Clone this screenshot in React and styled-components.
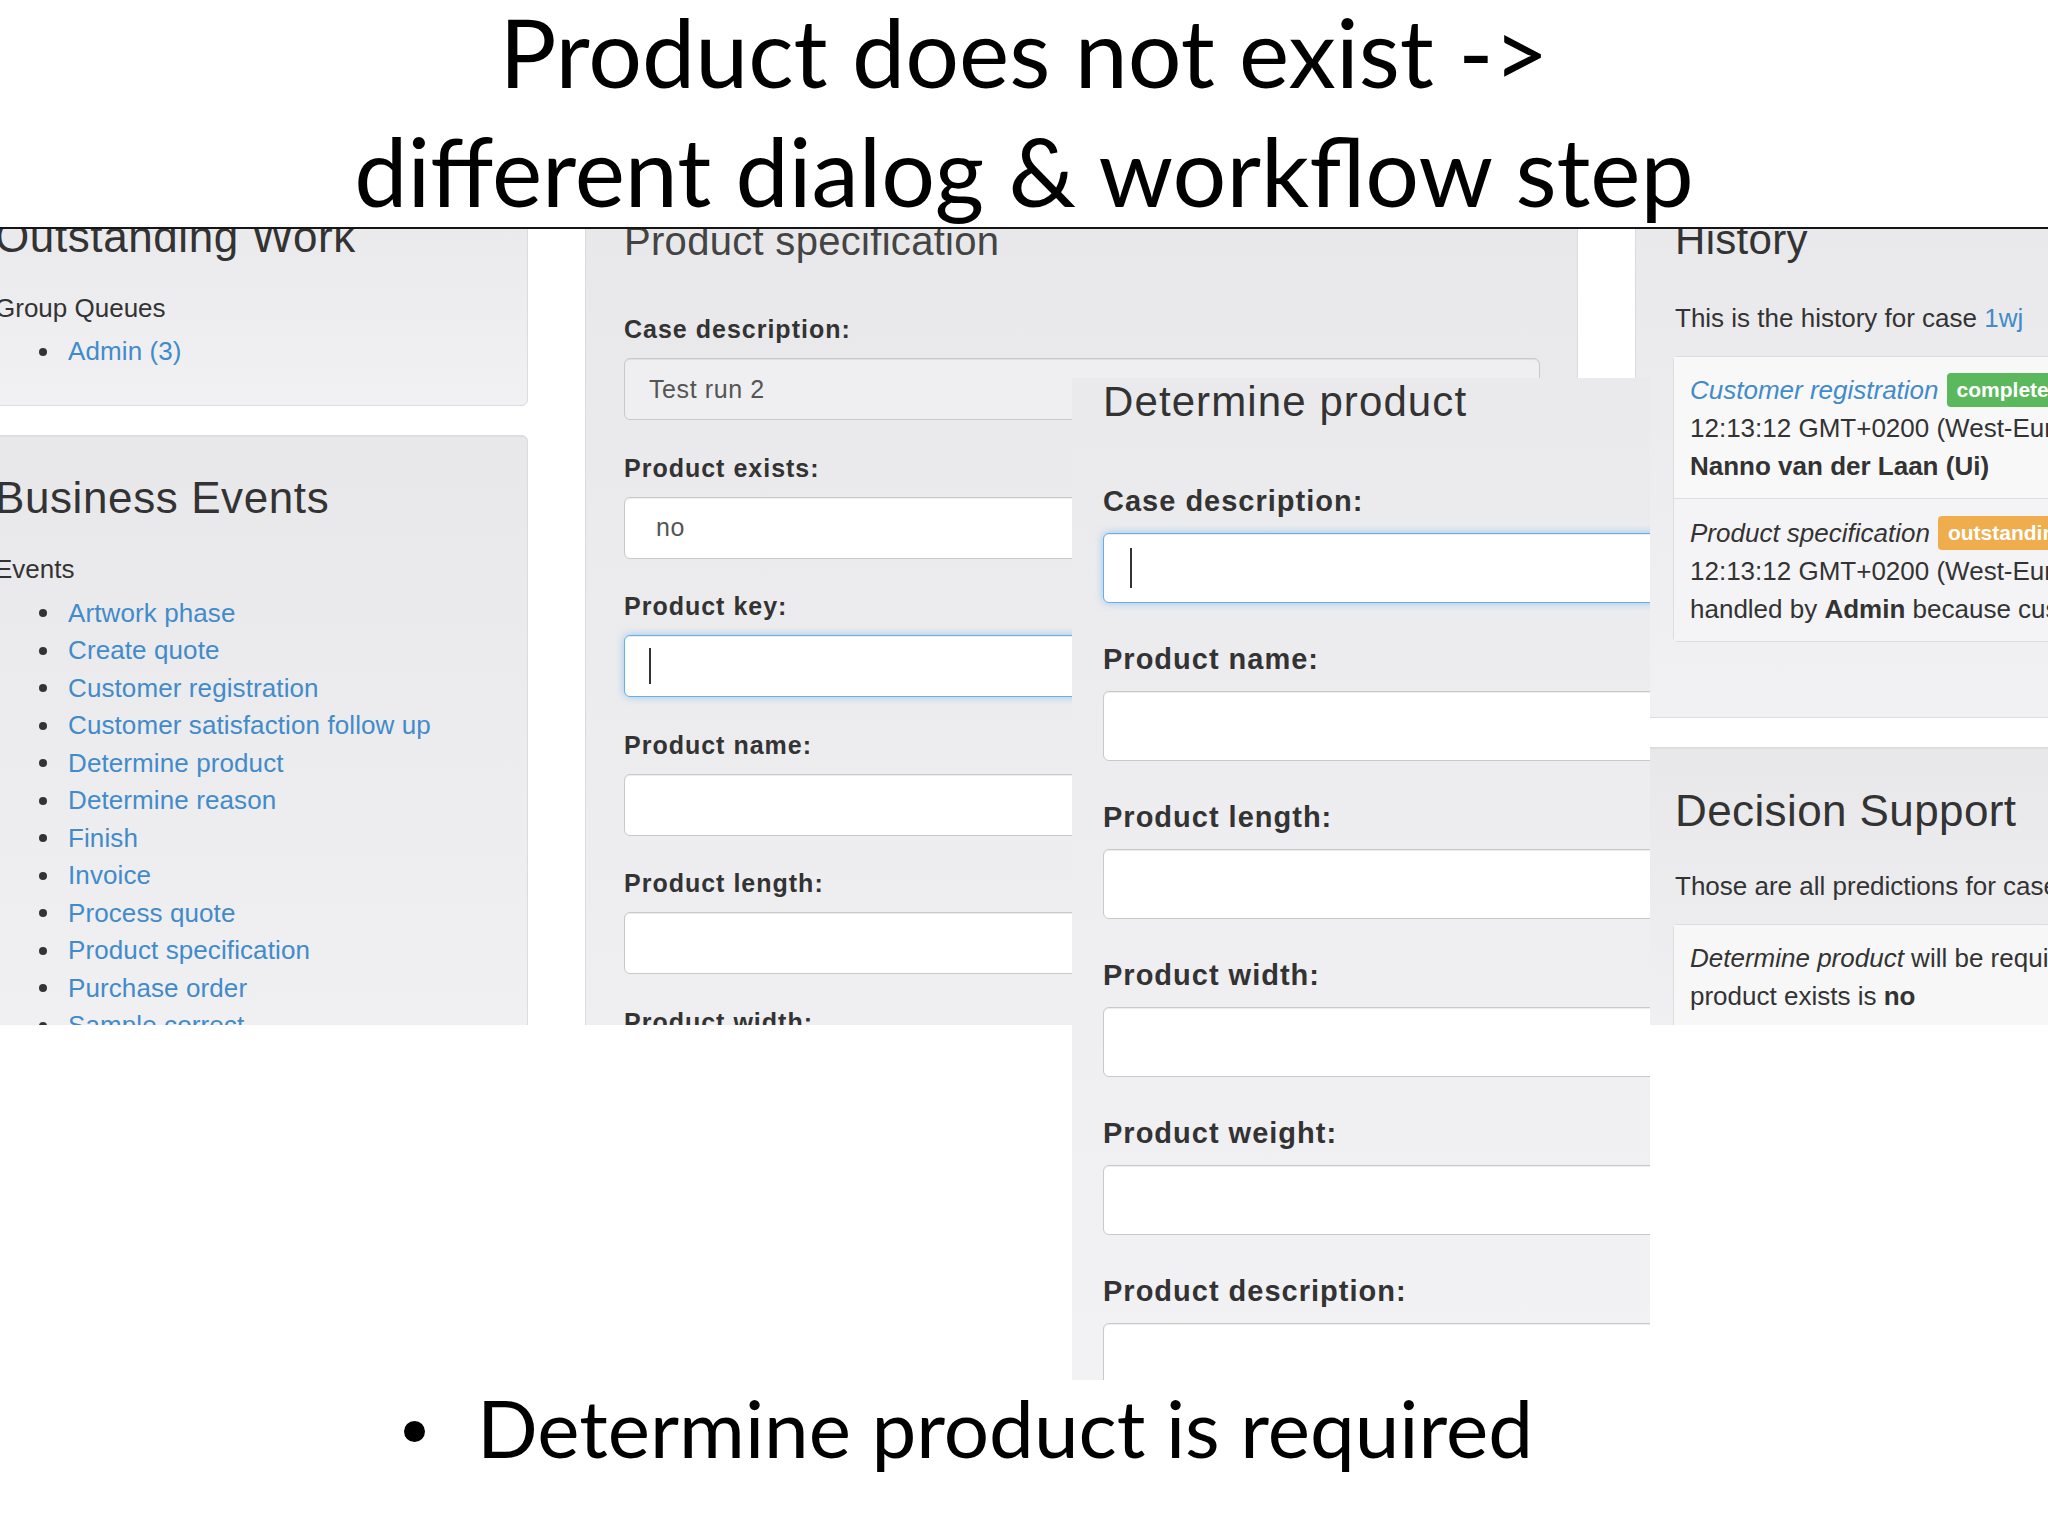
import React from "react";
import styled, { createGlobalStyle } from "styled-components";

const GlobalStyle = createGlobalStyle`
  html, body {
    margin: 0;
    padding: 0;
    background: #fff;
  }
  body {
    width: 2048px;
    height: 1536px;
    overflow: hidden;
  }
`;

const Slide = styled.div`
  position: relative;
  width: 2048px;
  height: 1536px;
  display: flex;
  flex-direction: column;
  overflow: hidden;
  background: #fff;
`;

const Title = styled.h1`
  margin: 0;
  height: 227px;
  box-sizing: border-box;
  font-family: Lato, "Open Sans", sans-serif;
  font-weight: 400;
  font-size: 95px;
  line-height: 120px;
  text-align: center;
  color: #000;
`;

const TitleLine = styled.div`
  margin-top: ${(p) => p.$offset || 0}px;
  white-space: nowrap;
`;

// the browser screenshot pasted into the slide
const Shot = styled.div`
  height: 796px;
  border-top: 2px solid #151515;
  display: flex;
  overflow: hidden;
  background: #fff;
  font-family: "Liberation Sans", Arial, sans-serif;
  color: #333;
  font-size: 26px;
  line-height: 37px;
`;

const Column = styled.div`
  flex: none;
  width: ${(p) => p.$width}px;
  margin-left: ${(p) => p.$left}px;
  display: flex;
  flex-direction: column;
`;

const Panel = styled.div`
  flex: none;
  margin-top: ${(p) => p.$top}px;
  padding: ${(p) => p.$pad};
  background: linear-gradient(to bottom, #e8e8ea, #f1f1f3);
  border: 1px solid #dcdcdf;
  border-radius: 6px;
  box-shadow: inset 0 1px 1px rgba(0, 0, 0, 0.05);
`;

const PanelHeading = styled.h2`
  margin: 0;
  font-weight: 400;
  font-size: ${(p) => p.$size || 44}px;
  line-height: 46px;
  letter-spacing: ${(p) => p.$spacing ?? 0.6}px;
  color: ${(p) => p.$color || "#333"};
  white-space: nowrap;
`;

const Para = styled.p`
  margin: ${(p) => p.$top}px 0 0;
  white-space: nowrap;
`;

const Bullets = styled.ul`
  list-style: none;
  margin: ${(p) => p.$top}px 0 0;
  padding: 0 0 0 44px;
  line-height: ${(p) => p.$line || 37}px;
`;

const Bullet = styled.li`
  display: flex;
  align-items: center;
  white-space: nowrap;
  letter-spacing: 0.1px;
  &::before {
    content: "";
    flex: none;
    width: 8px;
    height: 8px;
    border-radius: 50%;
    background: #333;
    margin-right: 21px;
  }
`;

const Link = styled.a`
  color: #428bca;
  text-decoration: none;
`;

const Label = styled.div`
  margin-top: ${(p) => p.$top}px;
  font-weight: 700;
  font-size: ${(p) => p.$size}px;
  line-height: ${(p) => p.$line}px;
  letter-spacing: 1px;
  color: #333;
  white-space: nowrap;
`;

const Field = styled.div`
  box-sizing: border-box;
  flex: none;
  margin-top: ${(p) => p.$top}px;
  width: ${(p) => p.$width || "100%"};
  height: ${(p) => p.$height}px;
  padding-left: ${(p) => p.$indent || 24}px;
  display: flex;
  align-items: center;
  background: ${(p) => (p.$disabled ? "#efeff1" : "#fff")};
  border: 1px solid ${(p) => (p.$focus ? "#66afe9" : "#c9c9cc")};
  border-radius: 6px;
  box-shadow: ${(p) =>
    p.$focus
      ? "inset 0 1px 1px rgba(0,0,0,.075), 0 0 8px rgba(102,175,233,.6)"
      : "inset 0 1px 1px rgba(0,0,0,.075)"};
  font-size: 25px;
  letter-spacing: 0.6px;
  color: #555;
`;

const Caret = styled.span`
  width: 2px;
  height: ${(p) => p.$height}px;
  background: #333;
`;

const ListGroup = styled.div`
  margin: ${(p) => p.$top}px 0 0 -2px;
  border: 1px solid #dddde0;
  border-radius: 4px 0 0 4px;
  line-height: 38px;
`;

const ListItem = styled.div`
  padding: ${(p) => p.$pad};
  background: ${(p) => p.$bg};
  border-top: ${(p) => (p.$first ? "none" : "1px solid #dddde0")};
  white-space: nowrap;
`;

const Step = styled.em`
  color: ${(p) => (p.$link ? "#428bca" : "#333")};
`;

const Badge = styled.span`
  display: inline-block;
  margin-left: 8px;
  padding: 0 10px;
  height: 34px;
  line-height: 34px;
  vertical-align: 2px;
  border-radius: 4px;
  background: ${(p) => p.$color};
  color: #fff;
  font-size: 21px;
  font-weight: 700;
`;

// dialog pasted on top of the screenshot
const Dialog = styled.div`
  position: absolute;
  left: 1072px;
  top: 378px;
  width: 578px;
  height: 1002px;
  box-sizing: border-box;
  padding: 1px 0 0 31px;
  overflow: hidden;
  display: flex;
  flex-direction: column;
  background: linear-gradient(to bottom, #eaeaec, #f2f2f4);
  font-family: "Liberation Sans", Arial, sans-serif;
  color: #333;
`;

const DialogHeading = styled.h2`
  margin: 0;
  font-weight: 400;
  font-size: 42px;
  line-height: 46px;
  letter-spacing: 1.1px;
  color: #333;
  white-space: nowrap;
`;

const Footer = styled.div`
  flex: 1;
  display: flex;
  align-items: flex-start;
  padding: 0 0 0 404px;
  font-family: Lato, "Open Sans", sans-serif;
  font-size: 80px;
  color: #000;
`;

const FooterDot = styled.span`
  flex: none;
  width: 21px;
  height: 21px;
  margin-top: 396px;
  border-radius: 50%;
  background: #000;
`;

const FooterText = styled.span`
  margin: 352px 0 0 52px;
  line-height: 100px;
  white-space: nowrap;
`;

const queues = ["Admin (3)"];
const events = [
  "Artwork phase",
  "Create quote",
  "Customer registration",
  "Customer satisfaction follow up",
  "Determine product",
  "Determine reason",
  "Finish",
  "Invoice",
  "Process quote",
  "Product specification",
  "Purchase order",
  "Sample correct",
  "Sample incorrect",
];

const specFields = [
  { label: "Case description:", value: "Test run 2", disabled: true },
  { label: "Product exists:", value: "no", indent: 31 },
  { label: "Product key:", focus: true },
  { label: "Product name:" },
  { label: "Product length:" },
  { label: "Product width:" },
  { label: "Product weight:" },
];

const dialogFields = [
  { label: "Case description:", focus: true },
  { label: "Product name:" },
  { label: "Product length:" },
  { label: "Product width:" },
  { label: "Product weight:" },
  { label: "Product description:" },
];

function App() {
  return (
    <>
      <GlobalStyle />
      <Slide>
        <Title>
          <TitleLine $offset={-9}>Product does not exist -&gt;</TitleLine>
          <TitleLine $offset={-1}>different dialog &amp; workflow step</TitleLine>
        </Title>

        <Shot>
          {/* left: queues and business events */}
          <Column $width={548} $left={-20}>
            <Panel $top={-60} $pad="44px 14px 35px">
              <PanelHeading>Outstanding Work</PanelHeading>
              <Para $top={30}>Group Queues</Para>
              <Bullets $top={6}>
                {queues.map((q) => (
                  <Bullet key={q}>
                    <Link>{q}</Link>
                  </Bullet>
                ))}
              </Bullets>
            </Panel>
            <Panel $top={29} $pad="39px 14px 20px">
              <PanelHeading>Business Events</PanelHeading>
              <Para $top={29.5}>Events</Para>
              <Bullets $top={7} $line={37.5}>
                {events.map((e) => (
                  <Bullet key={e}>
                    <Link>{e}</Link>
                  </Bullet>
                ))}
              </Bullets>
            </Panel>
          </Column>

          {/* middle: product specification form */}
          <Column $width={993} $left={57}>
            <Panel $top={-60} $pad="48px 37px 40px 38px">
              <PanelHeading $size={40} $spacing={0.3} $color="#444">
                Product specification
              </PanelHeading>
              {specFields.map((f, i) => (
                <React.Fragment key={f.label}>
                  <Label $top={i === 0 ? 48 : 30.5} $size={25} $line={35}>
                    {f.label}
                  </Label>
                  <Field
                    $top={11}
                    $height={62}
                    $disabled={f.disabled}
                    $focus={f.focus}
                    $indent={f.indent}
                  >
                    {f.value}
                    {f.focus && <Caret $height={36} />}
                  </Field>
                </React.Fragment>
              ))}
            </Panel>
          </Column>

          {/* right: history and decision support */}
          <Column $width={620} $left={57}>
            <Panel $top={-60} $pad="47px 0 75px 39px">
              <PanelHeading $size={42} $spacing={0.3}>History</PanelHeading>
              <Para $top={36.5}>
                This is the history for case <Link>1wj</Link>
              </Para>
              <ListGroup $top={19.5}>
                <ListItem $first $pad="14px 16px 13px" $bg="#f8f8f9">
                  <div>
                    <Step $link>Customer registration</Step>
                    <Badge $color="#5cb85c">completed</Badge> Tue Jun 09 2015
                  </div>
                  <div>12:13:12 GMT+0200 (West-Europa (zomertijd))</div>
                  <div>
                    <b>Nanno van der Laan (Ui)</b>
                  </div>
                </ListItem>
                <ListItem $pad="15px 16px 13px" $bg="#f4f4f6">
                  <div>
                    <Step>Product specification</Step>
                    <Badge $color="#f0ad4e">outstanding</Badge> Tue Jun 09 2015
                  </div>
                  <div>12:13:12 GMT+0200 (West-Europa (zomertijd))</div>
                  <div>
                    handled by <b>Admin</b> because customer was registered
                  </div>
                </ListItem>
              </ListGroup>
            </Panel>
            <Panel $top={29} $pad="40px 0 40px 39px">
              <PanelHeading $size={44} $spacing={0.4}>
                Decision Support
              </PanelHeading>
              <Para $top={33.5}>Those are all predictions for case 1wj</Para>
              <ListGroup $top={19.5}>
                <ListItem $first $pad="14px 16px 14px" $bg="#f7f7f8">
                  <div>
                    <Step>Determine product</Step> will be required because
                  </div>
                  <div>
                    product exists is <b>no</b>
                  </div>
                </ListItem>
              </ListGroup>
            </Panel>
          </Column>
        </Shot>

        <Dialog>
          <DialogHeading>Determine product</DialogHeading>
          {dialogFields.map((f, i) => (
            <React.Fragment key={f.label}>
              <Label $top={i === 0 ? 56 : 36} $size={29} $line={40}>
                {f.label}
              </Label>
              <Field $top={12} $height={70} $width="640px" $focus={f.focus} $indent={26}>
                {f.focus && <Caret $height={40} />}
              </Field>
            </React.Fragment>
          ))}
        </Dialog>

        <Footer>
          <FooterDot />
          <FooterText>Determine product is required</FooterText>
        </Footer>
      </Slide>
    </>
  );
}

export default App;
